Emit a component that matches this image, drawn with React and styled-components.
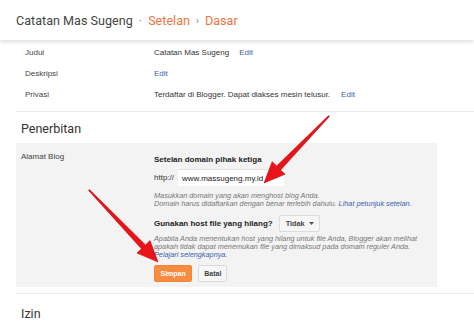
import React from "react";
import styled, { createGlobalStyle } from "styled-components";

const Global = createGlobalStyle`
  html, body { margin: 0; padding: 0; background: #fff; }
  body { width: 474px; height: 331px; overflow: hidden; font-family: "Liberation Sans", Arial, sans-serif; }
`;

const Page = styled.div`
  position: relative;
  width: 474px;
  height: 331px;
  overflow: hidden;
`;

const Header = styled.div`
  height: 40px;
  display: flex;
  align-items: center;
  padding-left: 16px;
  font-family: Roboto, "Open Sans", sans-serif;
  font-size: 12.6px;
  color: #444;
  box-shadow: 0 2px 4px rgba(0, 0, 0, 0.13);
  position: relative;
  z-index: 1;
`;

const Crumb = styled.span`
  color: ${(p) => (p.accent ? "#e8763f" : "#444")};
`;

const Sep = styled.span`
  color: #888;
  font-size: ${(p) => p.size || 13}px;
  margin: 0 6px;
`;

const Body = styled.div`
  padding-left: 16px;
`;

const Info = styled.div`
  padding-top: 2px;
  padding-bottom: 6px;
  border-bottom: 1px solid #ebebeb;
`;

const Row = styled.div`
  display: flex;
  align-items: center;
  height: 21px;
  font-size: 8px;
  color: #333;
`;

const Label = styled.div`
  width: ${(p) => 138 - (p.indent || 5)}px;
  padding-left: ${(p) => p.indent || 5}px;
  color: #444;
  flex: none;
`;

const Value = styled.div`
  display: flex;
  gap: ${(p) => p.gap || 8}px;
`;

const Link = styled.span`
  color: #3a5fb0;
  font-style: ${(p) => (p.italic ? "italic" : "normal")};
`;

const Heading = styled.div`
  height: ${(p) => p.h || 31}px;
  padding-left: 5px;
  display: flex;
  align-items: center;
  padding-top: 2px;
  box-sizing: border-box;
  font-family: Roboto, "Open Sans", sans-serif;
  font-size: 12.5px;
  color: #333;
`;

const Panel = styled.div`
  width: 421px;
  height: 144px;
  box-sizing: border-box;
  background: #f3f3f3;
  display: flex;
  padding-top: 9px;
  font-size: 8px;
  color: #444;
`;

const Form = styled.div`
  display: flex;
  flex-direction: column;
`;

const Strong = styled.div`
  font-weight: bold;
  font-size: 8px;
  color: #222;
  display: flex;
  align-items: center;
  gap: 6px;
  margin-top: ${(p) => p.mt || 0}px;
`;

const InputRow = styled.div`
  display: flex;
  align-items: center;
  gap: 4px;
  margin-top: 5px;
  color: #333;
`;

const Input = styled.div`
  width: 106px;
  height: 17px;
  box-sizing: border-box;
  background: #fff;
  border-top: 1px solid #e2e2e2;
  padding-left: 4px;
  display: flex;
  align-items: center;
  font-size: 8px;
  color: #222;
`;

const Help = styled.div`
  font-style: italic;
  font-size: 7.3px;
  line-height: 8.3px;
  color: #777;
  margin-top: ${(p) => p.mt || 0}px;
`;

const Select = styled.div`
  height: 17px;
  width: 41px;
  box-sizing: border-box;
  padding: 0 5px 0 6px;
  background: #f6f6f6;
  border: 1px solid #dcdcdc;
  border-radius: 2px;
  display: flex;
  align-items: center;
  justify-content: space-between;
  font-size: 7.3px;
  font-weight: bold;
  color: #444;
`;

const Buttons = styled.div`
  display: flex;
  gap: 6px;
  margin-top: 6px;
`;

const Button = styled.div`
  height: 17px;
  padding: 0 ${(p) => (p.primary ? 5.5 : 5)}px;
  display: flex;
  align-items: center;
  box-sizing: border-box;
  border-radius: 2px;
  font-size: 7px;
  font-weight: bold;
  color: ${(p) => (p.primary ? "#fff" : "#444")};
  background: ${(p) => (p.primary ? "#f68c3f" : "#f6f6f6")};
  border: 1px solid ${(p) => (p.primary ? "#f0843a" : "#dadada")};
`;

const Divider = styled.div`
  margin-top: 6px;
  border-top: 1px solid #ececec;
`;

const Arrows = styled.svg`
  position: absolute;
  left: 0;
  top: 0;
  pointer-events: none;
`;

function Arrow({ x1, y1, x2, y2 }) {
  const dx = x2 - x1;
  const dy = y2 - y1;
  const len = Math.hypot(dx, dy);
  const ux = dx / len;
  const uy = dy / len;
  const px = -uy;
  const py = ux;
  const head = 21;
  const hw = 9;
  const bx = x2 - ux * head;
  const by = y2 - uy * head;
  const tw0 = 0.6;
  const tw1 = 2.8;
  const pts = [
    [x1 + px * tw0, y1 + py * tw0],
    [bx + px * tw1, by + py * tw1],
    [bx + px * hw, by + py * hw],
    [x2, y2],
    [bx - px * hw, by - py * hw],
    [bx - px * tw1, by - py * tw1],
    [x1 - px * tw0, y1 - py * tw0],
  ];
  return (
    <polygon
      points={pts.map((p) => p.join(",")).join(" ")}
      fill="#e8141a"
      stroke="#c8080c"
      strokeWidth="0.6"
      strokeLinejoin="round"
    />
  );
}

export default function App() {
  return (
    <Page>
      <Global />
      <Header>
        <Crumb>Catatan Mas Sugeng</Crumb>
        <Sep>·</Sep>
        <Crumb accent>Setelan</Crumb>
        <Sep size={10}>›</Sep>
        <Crumb accent>Dasar</Crumb>
      </Header>
      <Body>
        <Info>
          <Row>
            <Label indent={9}>Judul</Label>
            <Value gap={10}>
              <span>Catatan Mas Sugeng</span>
              <Link>Edit</Link>
            </Value>
          </Row>
          <Row>
            <Label indent={9}>Deskripsi</Label>
            <Value>
              <Link>Edit</Link>
            </Value>
          </Row>
          <Row>
            <Label indent={9}>Privasi</Label>
            <Value gap={11}>
              <span>Terdaftar di Blogger. Dapat diakses mesin telusur.</span>
              <Link>Edit</Link>
            </Value>
          </Row>
        </Info>
        <Heading>Penerbitan</Heading>
        <Panel>
          <Label>Alamat Blog</Label>
          <Form>
            <Strong mt={3}>Setelan domain pihak ketiga</Strong>
            <InputRow>
              <span>http://</span>
              <Input>www.massugeng.my.id</Input>
            </InputRow>
            <Help mt={6}>
              Masukkan domain yang akan menghost blog Anda.
              <br />
              Domain harus didaftarkan dengan benar terlebih dahulu.{" "}
              <Link italic>Lihat petunjuk setelan.</Link>
            </Help>
            <Strong mt={6}>
              Gunakan host file yang hilang?
              <Select>
                Tidak
                <svg width="5" height="3" viewBox="0 0 5 3">
                  <path d="M0 0h5L2.5 3z" fill="#555" />
                </svg>
              </Select>
            </Strong>
            <Help mt={3}>
              Apabila Anda menentukan host yang hilang untuk file Anda, Blogger akan melihat
              <br />
              apakah tidak dapat menemukan file yang dimaksud pada domain reguler Anda.
              <br />
              <Link italic>Pelajari selengkapnya.</Link>
            </Help>
            <Buttons>
              <Button primary>Simpan</Button>
              <Button>Batal</Button>
            </Buttons>
          </Form>
        </Panel>
        <Divider />
        <Heading h={36}>Izin</Heading>
      </Body>
      <Arrows width="474" height="331">
        <Arrow x1={329} y1={116} x2={264} y2={183} />
        <Arrow x1={89} y1={190} x2={158} y2={262} />
      </Arrows>
    </Page>
  );
}
